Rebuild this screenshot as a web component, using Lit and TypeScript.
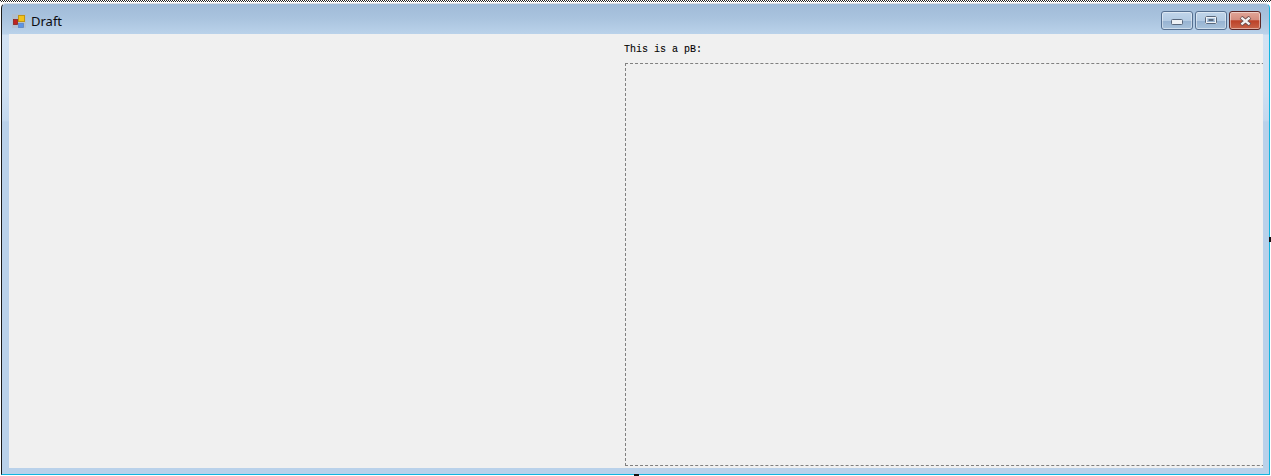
import { LitElement, html, css } from "lit";
import { customElement } from "lit/decorators.js";

@customElement("app-root")
export class AppRoot extends LitElement {
  static styles = css`
    :host { display: block; width: 1271px; height: 476px; overflow: hidden; background: #fff; position: relative; }
    .dots {
      height: 2px; margin-bottom: 1px;
      background:
        repeating-linear-gradient(90deg, #222 0 1px, #fff 1px 2px) 0 0 / 100% 1px no-repeat,
        repeating-linear-gradient(90deg, #fff 0 1px, #222 1px 2px) 0 1px / 100% 1px no-repeat;
    }
    .window {
      height: 472px; margin: 0 1px 1px 1px; box-sizing: border-box;
      border: 1px solid #1b1b1b; border-top-color: #d8dde4; border-right-color: #12b5e0; border-bottom-color: #12b5e0;
      border-radius: 5px 5px 0 0;
      background:
        linear-gradient(180deg, #a0bbd8 0, #a9c3de 14px, #bad2ea 30px, #d2e2f3 31px, #cfe0f2 85px, #c4d9ef 116px, #b9d1ea 118px, #b9d1ea 100%);
      display: flex; flex-direction: column;
    }
    .title { height: 30px; flex: none; display: flex; align-items: center; padding: 3px 8px 0 10px; box-sizing: border-box; }
    .app-icon { width: 14px; height: 14px; margin-right: 4px; flex: none; display: block; }
    .caption { font: 13px/16px "Noto Sans", "Open Sans", sans-serif; color: #0b0b10; margin-left: 1px; flex: 1; }
    .buttons { display: flex; gap: 2px; }
    .btn {
      width: 32px; height: 19px; box-sizing: border-box; border: 1px solid #556f90; border-radius: 3px;
      box-shadow: inset 0 0 0 1px rgba(255,255,255,.45);
      background: linear-gradient(180deg, #c0d5ea 0, #b4cbe3 50%, #96b2d1 52%, #a9c3dc 100%);
      display: flex; align-items: center; justify-content: center;
    }
    .btn.close {
      border-color: #5c2626;
      background: linear-gradient(180deg, #e1a597 0, #d58e80 45%, #bc4128 52%, #c8644a 100%);
    }
    .btn svg { display: block; }
    .glyph-min { margin-top: 3px; }
    .glyph-max { margin-top: -1px; }
    .client {
      height: 434px; margin: 0 6px 0 7px; background: #f0f0f0;
      display: grid; grid-template-columns: 614px 1fr; overflow: hidden;
    }
    .pane { display: flex; flex-direction: column; min-width: 0; }
    .label { font: 10px/12px "Liberation Mono", monospace; color: #000; margin: 10px 0 0 1px; -webkit-text-stroke: .1px #000; }
    .pb {
      height: 403px; width: 700px; box-sizing: border-box; margin: 7px 0 0 2px;
      border: 1px dashed #808080; background: #f0f0f0;
    }
    .notch-b { position: absolute; left: 634px; top: 474px; width: 5px; height: 2px; background: #111; }
    .notch-r { position: absolute; left: 1269px; top: 237px; width: 2px; height: 5px; background: #111; }
  `;

  render() {
    return html`
      <div class="dots"></div>
      <div class="window">
        <div class="title">
          <svg class="app-icon" viewBox="0 0 14 14">
            <rect x="0" y="0" width="14" height="14" fill="#b4bac2" opacity=".55"/>
            <rect x="1.5" y="5.5" width="4" height="5" fill="#c0241f" stroke="#8a2320" stroke-width=".8"/>
            <rect x="6.5" y="1.5" width="6" height="6" fill="#f2c21a" stroke="#c09514"/>
            <rect x="6.5" y="9.5" width="5" height="4" fill="#5c94e6" stroke="#5e86c4" stroke-width=".8"/>
          </svg>
          <span class="caption">Draft</span>
          <div class="buttons">
            <div class="btn">
              <svg class="glyph-min" width="12" height="6" viewBox="0 0 12 6"><rect x=".5" y=".5" width="11" height="5" rx="1" fill="#eef1f5" stroke="#58677c"/></svg>
            </div>
            <div class="btn">
              <svg class="glyph-max" width="12" height="8" viewBox="0 0 12 8"><rect x="1" y="1" width="10" height="6" fill="none" stroke="#f0f3f7" stroke-width="2"/><rect x=".5" y=".5" width="11" height="7" rx="1" fill="none" stroke="#58677c"/><rect x="3.5" y="3" width="5" height="2" fill="#58677c"/></svg>
            </div>
            <div class="btn close">
              <svg width="13" height="10" viewBox="0 0 13 10">
                <path d="M2 1.2 L11 8.8 M11 1.2 L2 8.8" stroke="#6b4a48" stroke-width="4" fill="none"/>
                <path d="M2.4 1.6 L10.6 8.4 M10.6 1.6 L2.4 8.4" stroke="#f4f2f2" stroke-width="2.4" fill="none"/>
              </svg>
            </div>
          </div>
        </div>
        <div class="client">
          <div class="pane"></div>
          <div class="pane">
            <div class="label">This is a pB:</div>
            <div class="pb"></div>
          </div>
        </div>
      </div>
      <div class="notch-b"></div>
      <div class="notch-r"></div>
    `;
  }
}
